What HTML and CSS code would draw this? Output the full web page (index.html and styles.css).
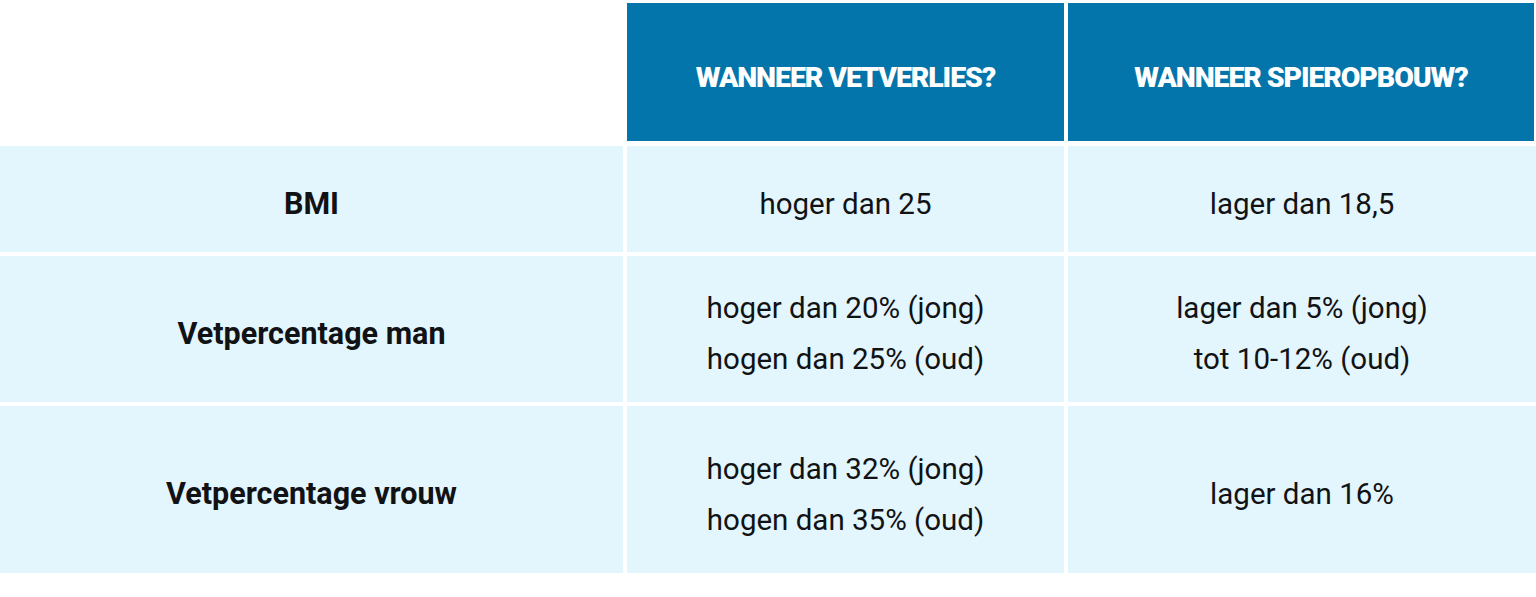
FILE: index.html
```html
<!DOCTYPE html>
<html lang="nl">
<head>
<meta charset="utf-8">
<title>Vetverlies of spieropbouw</title>
<link rel="stylesheet" href="styles.css">
</head>
<body>
<div class="table">
  <div class="corner"></div>
  <div class="head">WANNEER VETVERLIES?</div>
  <div class="head head-last">WANNEER SPIEROPBOUW?</div>

  <div class="cell label row1">BMI</div>
  <div class="cell row1">hoger dan 25</div>
  <div class="cell row1">lager dan 18,5</div>

  <div class="cell label row2">Vetpercentage man</div>
  <div class="cell row2"><span>hoger dan 20% (jong)</span><span>hogen dan 25% (oud)</span></div>
  <div class="cell row2"><span>lager dan 5% (jong)</span><span>tot 10-12% (oud)</span></div>

  <div class="cell label row3">Vetpercentage vrouw</div>
  <div class="cell row3"><span>hoger dan 32% (jong)</span><span>hogen dan 35% (oud)</span></div>
  <div class="cell row3">lager dan 16%</div>
</div>
</body>
</html>
```
FILE: styles.css
```css
html, body {
  margin: 0;
  padding: 0;
  background: #ffffff;
}

body {
  font-family: Roboto, "Liberation Sans", sans-serif;
  color: #111214;
}

.table {
  display: grid;
  grid-template-columns: 623px 437px 1fr;
  grid-template-rows: 139px 106px 146px 167px;
  column-gap: 4px;
  row-gap: 4px;
  padding-top: 3px;
}

.corner {
  background: #ffffff;
  margin-bottom: 1px;
}

.head {
  background: #0375aa;
  color: #ffffff;
  font-weight: 900;
  font-size: 28.5px;
  letter-spacing: -1.1px;
  display: flex;
  align-items: center;
  justify-content: center;
  padding-top: 10px;
  box-sizing: border-box;
  margin-bottom: 1px;
}

.head-last {
  margin-right: 2px;
}

.cell {
  background: #e3f5fd;
  display: flex;
  flex-direction: column;
  align-items: center;
  justify-content: center;
  font-size: 29.5px;
  line-height: 51px;
  padding-top: 10px;
  box-sizing: border-box;
}

.label {
  font-weight: 700;
  font-size: 30.5px;
  padding-top: 8px;
}

.row1 { grid-row: 2; }
.row2 { grid-row: 3; }
.row3 { grid-row: 4; }
```
